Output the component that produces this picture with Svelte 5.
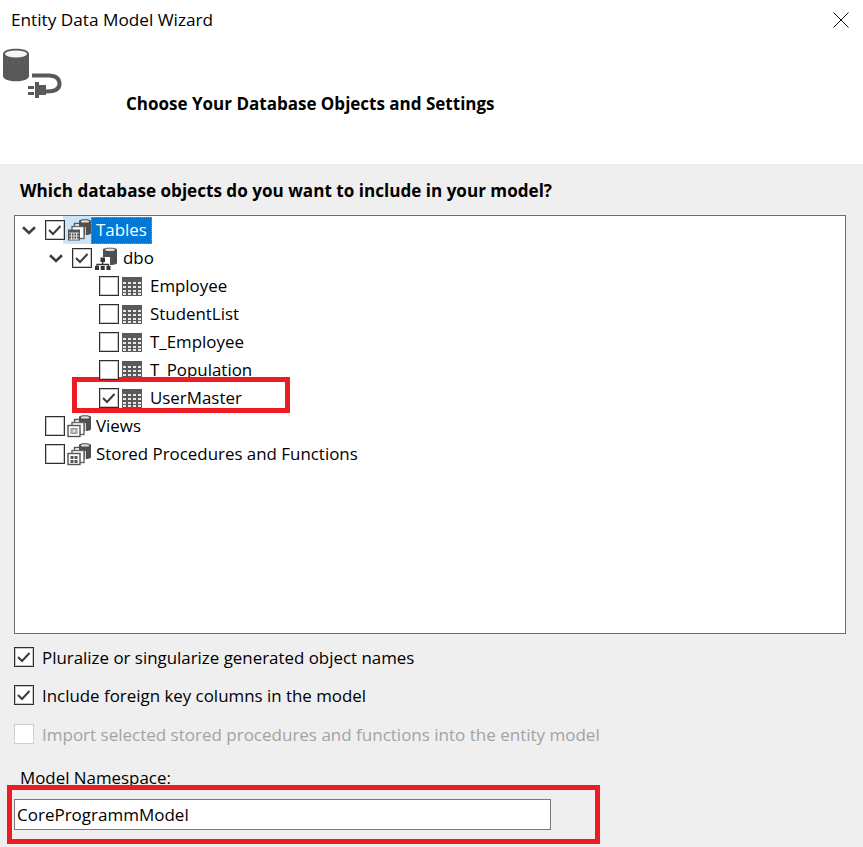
<script>
  const tree = [
    { label: 'Tables', level: 0, expander: true, checked: true, icon: 'tables', selected: true },
    { label: 'dbo', level: 1, expander: true, checked: true, icon: 'schema' },
    { label: 'Employee', level: 2, icon: 'table' },
    { label: 'StudentList', level: 2, icon: 'table' },
    { label: 'T_Employee', level: 2, icon: 'table' },
    { label: 'T_Population', level: 2, icon: 'table' },
    { label: 'UserMaster', level: 2, checked: true, icon: 'table' },
    { label: 'Views', level: 0, icon: 'views' },
    { label: 'Stored Procedures and Functions', level: 0, icon: 'procs' }
  ];
  const options = [
    { label: 'Pluralize or singularize generated object names', checked: true },
    { label: 'Include foreign key columns in the model', checked: true },
    { label: 'Import selected stored procedures and functions into the entity model', disabled: true }
  ];
  const gridX = [1, 6, 11, 16];
  const gridY = [5, 9, 13, 16];
</script>

{#snippet check(checked, disabled)}
  <span class="box" class:disabled>
    {#if checked}
      <svg width="18" height="18" viewBox="0 0 18 18"><path d="M3 9 L7 13 L14.5 5" fill="none" stroke="#3c3c3c" stroke-width="2" /></svg>
    {/if}
  </span>
{/snippet}

{#snippet stack(kind)}
  <svg width="24" height="24" viewBox="0 0 24 24">
    <rect x="7.5" y="5.5" width="10" height="11" fill="#fff" stroke="#555" stroke-width="1.4" />
    <path d="M12 3 C12 0.5 24 0.5 24 3 V15 C24 16.5 21 17 19 17 V9 H12 Z" fill="#4f4f4f" />
    <ellipse cx="18" cy="3.4" rx="4.2" ry="1.2" fill="#e2e2e2" />
    <rect x="5" y="8.5" width="12" height="12" fill="#fff" stroke="#666" stroke-width="1.4" />
    {#if kind === 'tables'}
      <rect x="1" y="11.5" width="12" height="11" fill="#555" />
      <path d="M2 15 H12 M2 18 H12 M2 21 H12 M4.5 15 V22 M7 15 V22 M9.5 15 V22" stroke="#ddd" stroke-width="1" fill="none" />
    {:else if kind === 'views'}
      <rect x="1" y="11.5" width="12" height="11" fill="#fff" stroke="#555" stroke-width="1.4" />
      <rect x="3.5" y="14" width="7" height="6" fill="#777" />
      <path d="M7 13.5 V20.5 M3 17 H11 M4 14.5 L10 19.5 M10 14.5 L4 19.5" stroke="#e2e2e2" stroke-width="1" />
    {:else}
      <rect x="1" y="11.5" width="12" height="11" fill="#fff" stroke="#555" stroke-width="1.4" />
      <rect x="3.5" y="14" width="3" height="3" fill="#555" />
      <rect x="7.5" y="14" width="3" height="3" fill="#555" />
      <rect x="3.5" y="18" width="3" height="3" fill="#555" />
      <rect x="7.5" y="18" width="3" height="3" fill="#555" />
    {/if}
  </svg>
{/snippet}

{#snippet nodeIcon(kind)}
  {#if kind === 'table'}
    <svg class="tableicon" width="20" height="19" viewBox="0 0 20 19">
      <rect x="0" y="0" width="20" height="19" fill="#5a5a5a" />
      {#each gridY as y}
        {#each gridX as x}
          <rect x={x} y={y} width="3" height="2" fill="#e8e8e8" />
        {/each}
      {/each}
    </svg>
  {:else if kind === 'schema'}
    <svg width="24" height="24" viewBox="0 0 24 24">
      <path d="M9 3.5 C9 1 23 1 23 3.5 V17 C23 18.5 19 19 16 19 V11 H9 Z" fill="#4f4f4f" />
      <ellipse cx="16" cy="3.8" rx="5" ry="1.3" fill="#e2e2e2" />
      <rect x="6.5" y="11.5" width="4.5" height="4.5" fill="#333" />
      <path d="M8.7 16 V18.5 M3 20.5 V18.5 H14.5 V20.5" fill="none" stroke="#333" stroke-width="1.3" />
      <rect x="1" y="20" width="4" height="4" fill="#333" />
      <rect x="6.7" y="20" width="4" height="4" fill="#333" />
      <rect x="12.5" y="20" width="4" height="4" fill="#333" />
    </svg>
  {:else}
    {@render stack(kind)}
  {/if}
{/snippet}

<div class="dialog">
  <header class="header">
    <div class="titlebar">
      <span class="title">Entity Data Model Wizard</span>
      <svg class="close" width="16" height="16" viewBox="0 0 16 16"><path d="M0.5 0.5 L15.5 15.5 M15.5 0.5 L0.5 15.5" stroke="#111" stroke-width="1" fill="none" /></svg>
    </div>
    <div class="banner">
      <svg class="plug" width="60" height="52" viewBox="0 0 60 52">
        <path d="M0 7 C0 0 26 0 26 7 V29 C26 36 0 36 0 29 Z" fill="#595959" />
        <ellipse cx="13" cy="7" rx="11" ry="3.4" fill="#f4f4f4" />
        <path d="M29 28.5 H46 C53 28.5 56.5 32 56.5 37 C56.5 42 52 44.5 43 44.5" fill="none" stroke="#595959" stroke-width="4" />
        <rect x="32" y="35" width="4" height="16" fill="#595959" />
        <rect x="36" y="38" width="7" height="10" fill="#595959" />
        <rect x="25" y="39" width="6" height="3" fill="#595959" />
        <rect x="25" y="45" width="6" height="3" fill="#595959" />
      </svg>
      <h1>Choose Your Database Objects and Settings</h1>
    </div>
  </header>

  <main class="body">
    <h2>Which database objects do you want to include in your model?</h2>
    <div class="treebox">
      {#each tree as node}
        <div class="row lvl{node.level}">
          <span class="expander">
            {#if node.expander}
              <svg width="14" height="9" viewBox="0 0 14 9"><path d="M1 1.2 L7 7 L13 1.2" fill="none" stroke="#404040" stroke-width="2.6" /></svg>
            {/if}
          </span>
          {@render check(node.checked, false)}
          <span class="nodeicon" class:hot={node.selected}>{@render nodeIcon(node.icon)}</span>
          <span class="label" class:selected={node.selected}>{node.label}</span>
        </div>
      {/each}
    </div>

    <div class="options">
      {#each options as opt}
        <div class="option" class:off={opt.disabled}>
          {@render check(opt.checked, opt.disabled)}
          <span>{opt.label}</span>
        </div>
      {/each}
    </div>

    <div class="nslabel">Model Namespace:</div>
    <input class="ns" value="CoreProgrammModel" readonly />
  </main>

  <div class="mark mark-row"></div>
  <div class="mark mark-ns"></div>
</div>

<style>
  :global(body) { margin: 0; background: #efefef; }
  .dialog {
    position: relative;
    width: 863px;
    height: 847px;
    overflow: hidden;
    background: #efefef;
    color: #000;
    font-family: "Open Sans", "Noto Sans", sans-serif;
    font-size: 16.9px;
  }
  .header { height: 164px; background: #fff; box-sizing: border-box; }
  .titlebar {
    height: 38px;
    margin-bottom: 2px;
    display: flex;
    align-items: center;
    justify-content: space-between;
    padding: 0 14px 0 11px;
  }
  .title { font-size: 17.2px; }
  .close { margin-top: 1px; }
  .banner { display: flex; align-items: flex-start; padding: 7px 0 0 3px; }
  .plug { flex: none; }
  h1 { margin: 46px 0 0 63px; font-size: 17px; line-height: 22px; font-weight: 700; }
  .body { padding: 0 17px 0 14px; }
  h2 { margin: 0; height: 51px; box-sizing: border-box; padding: 16px 0 0 6px; font-size: 17.1px; line-height: 22px; font-weight: 700; }
  .treebox {
    height: 419px;
    box-sizing: border-box;
    background: #fff;
    border: 1px solid #6e6e6e;
  }
  .row { display: flex; align-items: center; height: 28px; }
  .lvl0 { padding-left: 4px; }
  .lvl1 { padding-left: 31px; }
  .lvl2 { padding-left: 58px; }
  .expander { width: 26px; flex: none; padding-left: 3px; box-sizing: border-box; display: flex; align-items: center; }
  .box {
    position: relative;
    z-index: 1;
    width: 20px;
    height: 20px;
    box-sizing: border-box;
    flex: none;
    background: #fff;
    border: 1px solid #2e2e2e;
    box-shadow: inset 0 0 0 1px rgba(70, 70, 70, 0.3);
    display: flex;
    align-items: center;
    justify-content: center;
  }
  .box.disabled { border-color: #cfcfcf; box-shadow: none; }
  .nodeicon {
    width: 28px;
    height: 28px;
    margin-left: -2px;
    box-sizing: border-box;
    flex: none;
    display: flex;
    align-items: center;
    padding-left: 4px;
  }
  .nodeicon.hot { background: #cce4f7; }
  .tableicon { margin-left: 1px; }
  .label { height: 27px; line-height: 26px; padding: 0 5px; }
  .label.selected {
    background: #0078d7;
    color: #fff;
    outline: 1px dotted #e08a1e;
    outline-offset: -1px;
  }
  .options { margin-top: 13px; }
  .option { display: flex; align-items: center; gap: 8px; height: 20px; margin-bottom: 18px; }
  .option.off { color: #a3a3a3; margin-top: 19px; font-size: 17px; }
  .nslabel { padding-left: 6px; margin-top: 23px; height: 22px; line-height: 22px; }
  .ns {
    display: block;
    width: 537px;
    height: 31px;
    margin-top: 10px;
    box-sizing: border-box;
    padding: 0 2px;
    border: 1px solid #7a7a7a;
    background: #fff;
    font: inherit;
    font-size: 17px;
    color: #000;
    outline: none;
  }
  .mark { position: absolute; box-sizing: border-box; border: 5px solid #ed1c24; }
  .mark-row { left: 72px; top: 377px; width: 218px; height: 36px; }
  .mark-ns { left: 7px; top: 785px; width: 593px; height: 59px; }
</style>
